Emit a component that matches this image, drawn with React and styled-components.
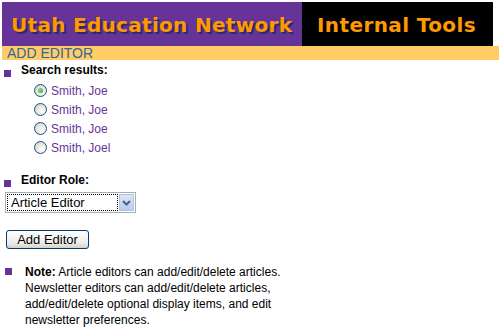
import React, { useState } from "react";
import styled, { createGlobalStyle } from "styled-components";

const GlobalStyle = createGlobalStyle`
  body {
    margin: 0;
    background: #ffffff;
    font-family: "Liberation Sans", Arial, sans-serif;
    font-size: 12px;
    color: #000000;
  }
`;

const Page = styled.div`
  width: 499px;
  padding: 2px 0 0 2px;
  box-sizing: border-box;
`;

const Banner = styled.div`
  display: flex;
  height: 44px;
  width: 491px;
`;

const BannerPart = styled.div`
  display: flex;
  align-items: center;
  width: ${({ $w }) => $w}px;
  padding: 2px 0 0 ${({ $pad }) => $pad}px;
  box-sizing: border-box;
  background: ${({ $bg }) => $bg};
  color: #ff9900;
  font-family: "DejaVu Sans", sans-serif;
  font-weight: bold;
  font-size: 20px;
  letter-spacing: ${({ $ls }) => $ls}px;
  text-shadow: ${({ $shadow }) => ($shadow ? "2px 2px 0 #2b2b66" : "none")};
  white-space: nowrap;
`;

const TitleBar = styled.div`
  background: #ffcc66;
  height: 14px;
  line-height: 15px;
  padding-left: 5px;
  color: #336699;
  font-size: 14px;
  margin-right: -2px;
`;

const Section = styled.div`
  display: flex;
  gap: 8px;
  padding-left: ${({ $indent }) => $indent || 2}px;
  margin-top: ${({ $top }) => $top}px;
`;

const Bullet = styled.span`
  flex: none;
  width: 7px;
  height: 7px;
  background: #663399;
  margin-top: ${({ $drop }) => $drop || 8}px;
`;

const Label = styled.div`
  font-weight: bold;
  line-height: 16px;
  padding-left: 2px;
`;

const RadioList = styled.div`
  display: flex;
  flex-direction: column;
  gap: 6px;
  padding: 6px 0 0 15px;
`;

const RadioRow = styled.label`
  display: flex;
  align-items: center;
  gap: 4px;
  height: 13px;
  color: #663399;
  cursor: pointer;
`;

const Radio = styled.input`
  appearance: none;
  margin: 0;
  width: 13px;
  height: 13px;
  border-radius: 50%;
  border: 1px solid #1c5180;
  box-sizing: border-box;
  background: radial-gradient(circle at 65% 65%, #ffffff 0%, #e6e6e0 50%, #c8c8c0 100%);
  display: grid;
  place-items: center;

  &:checked::after {
    content: "";
    width: 5px;
    height: 5px;
    border-radius: 50%;
    background: radial-gradient(circle at 40% 40%, #8fe08a, #21a121);
  }
`;

const SelectWrap = styled.div`
  display: flex;
  align-items: center;
  width: 131px;
  height: 21px;
  margin: 4px 0 0 3px;
  border: 1px solid #a5acb2;
  box-sizing: border-box;
  padding: 1px;
  background: #ffffff;
`;

const Select = styled.select`
  appearance: none;
  flex: 1;
  height: 17px;
  border: 1px dotted #000000;
  border-radius: 0;
  background: #ffffff;
  font-family: "Liberation Sans", Arial, sans-serif;
  font-size: 13px;
  padding: 0 0 0 3px;
  margin: 0;
  outline: none;
`;

const Arrow = styled.span`
  flex: none;
  width: 15px;
  height: 17px;
  margin-left: 1px;
  border: 1px solid #b4c3dc;
  box-sizing: border-box;
  background: linear-gradient(#dde6f6, #b9cbf0);
  display: grid;
  place-items: center;
`;

const Button = styled.button`
  display: block;
  margin: 17px 0 0 4px;
  width: 83px;
  height: 19px;
  padding: 0;
  border: 1px solid #003c74;
  border-radius: 3px;
  background: linear-gradient(#ffffff, #ececec 70%, #d6d0c5);
  font-family: "Liberation Sans", Arial, sans-serif;
  font-size: 13px;
  color: #000000;
`;

const NoteText = styled.div`
  line-height: 16px;
  width: 290px;
  padding-left: 5px;
`;

const names = ["Smith, Joe", "Smith, Joe", "Smith, Joe", "Smith, Joel"];

export default function App() {
  const [picked, setPicked] = useState(0);

  return (
    <Page>
      <GlobalStyle />
      <Banner>
        <BannerPart $w={300} $pad={9} $bg="#663399" $ls={0.3} $shadow>
          Utah Education Network
        </BannerPart>
        <BannerPart $w={191} $pad={15} $bg="#000000" $ls={0.4}>
          Internal Tools
        </BannerPart>
      </Banner>
      <TitleBar>ADD EDITOR</TitleBar>

      <Section $top={2}>
        <Bullet />
        <div>
          <Label>Search results:</Label>
          <RadioList>
            {names.map((n, i) => (
              <RadioRow key={i}>
                <Radio
                  type="radio"
                  name="editor"
                  checked={picked === i}
                  onChange={() => setPicked(i)}
                />
                {n}
              </RadioRow>
            ))}
          </RadioList>
        </div>
      </Section>

      <Section $top={18}>
        <Bullet />
        <Label>Editor Role:</Label>
      </Section>
      <SelectWrap>
        <Select defaultValue="article">
          <option value="article">Article Editor</option>
          <option value="newsletter">Newsletter Editor</option>
        </Select>
        <Arrow>
          <svg width="9" height="6" viewBox="0 0 9 6">
            <path d="M1 1 L4.5 4.5 L8 1" fill="none" stroke="#4d6185" strokeWidth="2" />
          </svg>
        </Arrow>
      </SelectWrap>
      <Button>Add Editor</Button>

      <Section $top={15} $indent={3}>
        <Bullet $drop={4} />
        <NoteText>
          <b>Note:</b> Article editors can add/edit/delete articles. Newsletter
          editors can add/edit/delete articles, add/edit/delete optional display
          items, and edit newsletter preferences.
        </NoteText>
      </Section>
    </Page>
  );
}
